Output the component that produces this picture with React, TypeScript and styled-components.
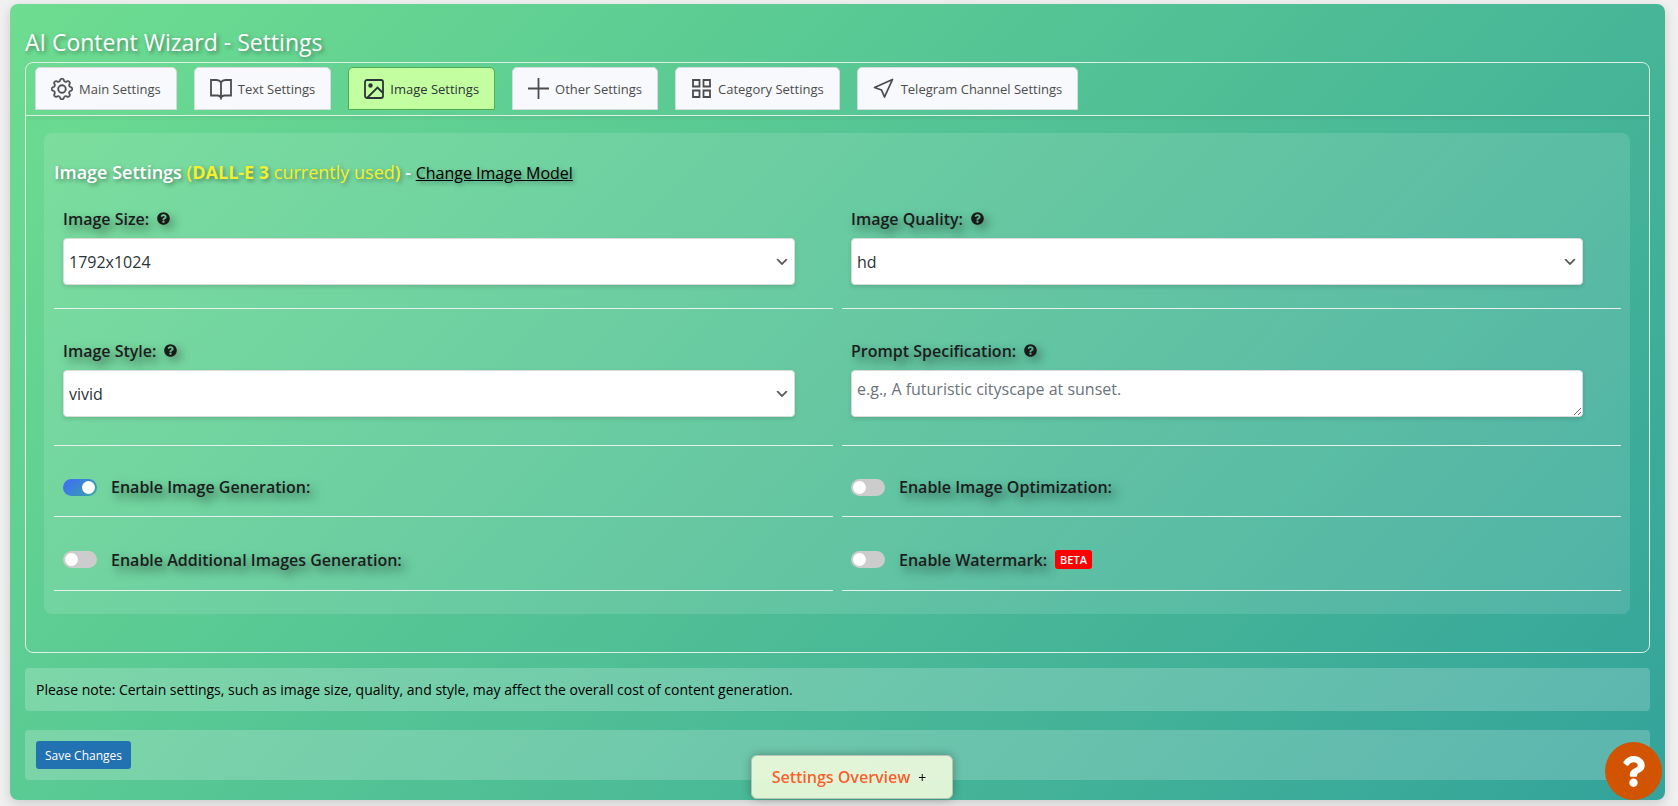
import React, { useState } from "react";
import styled, { createGlobalStyle, css } from "styled-components";
import { BsGear } from "react-icons/bs";
import { FaQuestion, FaQuestionCircle } from "react-icons/fa";

const GlobalStyle = createGlobalStyle`
  * { box-sizing: border-box; }
  body {
    margin: 0;
    background: #f0f0f1;
    color: #1d2327;
    font-family: "Segoe UI", "Open Sans", "Noto Sans", sans-serif;
    font-size: 14px;
  }
  button, input, select, textarea { font-family: inherit; }
`;

const Page = styled.main`
  margin: 4px 13px 6px 10px;
  padding: 23px 15px 20px;
  border-radius: 8px;
  background: linear-gradient(135deg, #6edd90, #33a39b);
  box-shadow: 0 4px 12px rgba(0, 0, 0, 0.15);
`;

const Title = styled.h1`
  margin: 0;
  height: 35px;
  color: #fff;
  font-size: 23px;
  line-height: 31px;
  font-weight: 400;
  text-shadow: 2px 2px 4px rgba(0, 0, 0, 0.4);
`;

const Tabbed = styled.section`
  border: 1px solid #dcf0e4;
  border-radius: 8px;
`;

const TabBar = styled.nav`
  display: flex;
  gap: 17px;
  padding: 4px 9px 5px;
  border-bottom: 1px solid #dcf0e4;
  box-shadow: 0 2px 4px rgba(0, 0, 0, 0.05);
`;

const Tab = styled.button<{ $active?: boolean }>`
  display: flex;
  align-items: center;
  gap: 6px;
  height: 43px;
  padding: 0 15px;
  border: 1px solid #d5dbdc;
  border-radius: 5px 5px 0 0;
  background: #f8f9fc;
  color: #4c4c4c;
  font-size: 13px;
  font-weight: 500;
  white-space: nowrap;
  svg { flex: none; }
  ${(p) =>
    p.$active &&
    css`
      background: #c3ffa0;
      border-color: #4fae4f;
      color: #2c3338;
    `}
`;

const TabBody = styled.div`
  padding: 17px 19px 38px 18px;
`;

const Card = styled.div`
  padding: 24px 9px 23px 10px;
  border-radius: 8px;
  background: rgba(255, 255, 255, 0.12);
`;

const Heading = styled.h2`
  margin: 0;
  color: #fff;
  font-size: 18px;
  line-height: 30px;
  font-weight: 600;
  text-shadow: 2px 2px 4px rgba(0, 0, 0, 0.4);
  a { color: #000; font-size: 16px; line-height: 20px; font-weight: 400; }
`;

const Model = styled.span`
  color: #f5f02a;
  span { font-weight: 400; }
  strong { font-weight: 700; }
`;

const Grid = styled.div`
  display: grid;
  grid-template-columns: 1fr 1fr;
  column-gap: 9px;
`;

const Cell = styled.div<{ $height: number }>`
  height: ${(p) => p.$height}px;
  padding: 0 38px 0 9px;
  border-bottom: 1px solid #e8f0ec;
`;

const FieldCell = styled(Cell)<{ $top: number }>`
  padding-top: ${(p) => p.$top}px;
`;

const ToggleCell = styled(Cell)`
  display: flex;
  align-items: center;
  gap: 14px;
  padding-top: 12px;
`;

const labelText = css`
  color: #1a1d1c;
  font-size: 16px;
  line-height: 24px;
  font-weight: 600;
  text-shadow: 5px 5px 10px rgba(0, 0, 0, 0.5);
`;

const FieldHead = styled.div`
  display: flex;
  align-items: center;
  gap: 8px;
  height: 24px;
  margin-bottom: 7px;
  label { ${labelText} }
  svg { color: #1a1a1a; margin-bottom: 2px; filter: drop-shadow(4px 4px 5px rgba(0, 0, 0, 0.4)); }
`;

const ToggleLabel = styled.label`
  ${labelText}
`;

const control = css`
  display: block;
  width: 100%;
  height: 47px;
  border: 1px solid #d8dcda;
  border-radius: 4px;
  background: #fff;
  color: #2c3338;
  font-size: 16px;
  line-height: 24px;
  box-shadow: 0 2px 4px rgba(0, 0, 0, 0.12);
`;

const SelectBox = styled.div`
  display: grid;
  align-items: center;
  > * { grid-area: 1 / 1; }
  svg { justify-self: end; margin-right: 5px; pointer-events: none; }
`;

const Select = styled.select`
  ${control}
  appearance: none;
  padding: 0 24px 0 5px;
`;

const TextArea = styled.textarea`
  ${control}
  padding: 6px 5px;
  resize: vertical;
  &::placeholder { color: #6b737b; opacity: 1; }
`;

const Switch = styled.input`
  appearance: none;
  flex: none;
  width: 34px;
  height: 17px;
  margin: 0;
  padding: 2px;
  border-radius: 9px;
  background: #ccc;
  cursor: pointer;
  &::before {
    content: "";
    display: block;
    width: 13px;
    height: 13px;
    border-radius: 50%;
    background: #fff;
  }
  &:checked { background: linear-gradient(135deg, #4169ff, #36a79b); }
  &:checked::before { margin-left: 17px; }
`;

const Beta = styled.span`
  margin-left: -6px;
  padding: 0 5px;
  border-radius: 3px;
  background: #f00;
  color: #fff;
  font-size: 11px;
  line-height: 19px;
  font-weight: 600;
`;

const Strip = styled.div`
  margin-top: 15px;
  padding: 11px;
  border-radius: 4px;
  background: rgba(255, 255, 255, 0.2);
`;

const Note = styled(Strip)`
  color: #000;
  font-size: 14px;
  line-height: 21px;
`;

const Actions = styled(Strip)`
  margin-top: 19px;
`;

const Save = styled.button`
  display: block;
  height: 28px;
  padding: 0 9px;
  border: 0;
  border-radius: 3px;
  background: #2271b1;
  color: #fff;
  font-size: 12px;
`;

const Overview = styled.button`
  position: fixed;
  left: calc(50% + 13px);
  bottom: 7px;
  transform: translateX(-50%);
  display: flex;
  align-items: center;
  justify-content: center;
  gap: 8px;
  width: 202px;
  height: 44px;
  padding: 0 6px 0 0;
  border: 1px solid #b8c4b8;
  border-radius: 6px;
  background: rgba(240, 250, 220, 0.9);
  box-shadow: 0 0 10px rgba(0, 0, 0, 0.3);
  color: #ff5c2b;
  font-size: 16px;
  font-weight: 600;
  span { color: #000; font-size: 14px; font-weight: 400; }
`;

const Help = styled.button`
  position: fixed;
  right: 16px;
  bottom: 6px;
  display: grid;
  place-items: center;
  width: 57px;
  height: 58px;
  padding: 0;
  border: 0;
  border-radius: 50%;
  background: #d35400;
  color: #fff;
`;

const Chevron = () => (
  <svg width="16" height="16" viewBox="0 0 20 20" aria-hidden="true">
    <path d="M5 6l5 5 5-5 2 1-7 7-7-7 2-1z" fill="#555" />
  </svg>
);

const line = { fill: "none", stroke: "currentColor", strokeWidth: 1.8 };

const BookIcon = () => (
  <svg width="22" height="22" viewBox="0 0 22 22" aria-hidden="true" {...line}>
    <path d="M11 4.200C10 2.600 8.500 2 6.500 2H1v15.500h6.500c1.800 0 3 .8 3.500 2.500c.5-1.700 1.700-2.500 3.500-2.500H21V2h-5.500C13.500 2 12 2.600 11 4.200zV20" />
  </svg>
);

const ImageIcon = () => (
  <svg width="20" height="20" viewBox="0 0 20 20" aria-hidden="true" {...line}>
    <rect x="1" y="1" width="18" height="18" rx="2" />
    <circle cx="6.500" cy="6.500" r="2.200" fill="currentColor" stroke="none" />
    <path d="M3 19L13.500 8.500L19 14" />
  </svg>
);

const PlusIcon = () => (
  <svg width="21" height="21" viewBox="0 0 21 21" aria-hidden="true" {...line}>
    <path d="M10.500 0v21M0 10.500h21" />
  </svg>
);

const GridIcon = () => (
  <svg width="21" height="21" viewBox="0 0 21 21" aria-hidden="true" {...line}>
    <path d="M2 2h6.500v6.500H2zM12.500 2H19v6.500h-6.500zM2 12.500h6.500V19H2zM12.500 12.500H19V19h-6.500z" />
  </svg>
);

const SendIcon = () => (
  <svg width="22" height="21" viewBox="0 0 22 21" aria-hidden="true" {...line}>
    <path d="M19.500 1.500L1.500 9.500L8.500 12L11.500 19z" strokeLinejoin="round" />
  </svg>
);

const tabs = [
  { name: "Main Settings", icon: <BsGear size={22} stroke="currentColor" strokeWidth={0.3} /> },
  { name: "Text Settings", icon: <BookIcon /> },
  { name: "Image Settings", icon: <ImageIcon /> },
  { name: "Other Settings", icon: <PlusIcon /> },
  { name: "Category Settings", icon: <GridIcon /> },
  { name: "Telegram Channel Settings", icon: <SendIcon /> },
];

function SelectField(p: { id: string; label: string; value: string; options: string[]; top: number; height: number }) {
  return (
    <FieldCell $top={p.top} $height={p.height}>
      <FieldHead>
        <label htmlFor={p.id}>{p.label}</label>
        <FaQuestionCircle size={13} />
      </FieldHead>
      <SelectBox>
        <Select id={p.id} defaultValue={p.value}>
          {p.options.map((o) => (
            <option key={o}>{o}</option>
          ))}
        </Select>
        <Chevron />
      </SelectBox>
    </FieldCell>
  );
}

function ToggleField(p: { id: string; label: string; on?: boolean; beta?: boolean; height: number }) {
  return (
    <ToggleCell $height={p.height}>
      <Switch type="checkbox" id={p.id} defaultChecked={p.on} />
      <ToggleLabel htmlFor={p.id}>{p.label}</ToggleLabel>
      {p.beta && <Beta>BETA</Beta>}
    </ToggleCell>
  );
}

export default function App() {
  const [active, setActive] = useState("Image Settings");
  return (
    <>
      <GlobalStyle />
      <Page>
        <Title>AI Content Wizard - Settings</Title>
        <Tabbed>
          <TabBar>
            {tabs.map((t) => (
              <Tab key={t.name} type="button" $active={t.name === active} onClick={() => setActive(t.name)}>
                {t.icon}
                {t.name}
              </Tab>
            ))}
          </TabBar>
          <TabBody>
            <Card>
              <Heading>
                Image Settings{" "}
                <Model>
                  (<strong>DALL-E 3</strong> <span>currently used</span>)
                </Model>{" "}
                - <a href="#model">Change Image Model</a>
              </Heading>
              <Grid>
                <SelectField id="size" label="Image Size:" value="1792x1024" options={["1024x1024", "1792x1024", "1024x1792"]} top={20} height={122} />
                <SelectField id="quality" label="Image Quality:" value="hd" options={["standard", "hd"]} top={20} height={122} />
                <SelectField id="style" label="Image Style:" value="vivid" options={["vivid", "natural"]} top={30} height={137} />
                <FieldCell $top={30} $height={137}>
                  <FieldHead>
                    <label htmlFor="prompt">Prompt Specification:</label>
                    <FaQuestionCircle size={13} />
                  </FieldHead>
                  <TextArea id="prompt" placeholder="e.g., A futuristic cityscape at sunset." />
                </FieldCell>
                <ToggleField id="gen" label="Enable Image Generation:" on height={71} />
                <ToggleField id="opt" label="Enable Image Optimization:" height={71} />
                <ToggleField id="more" label="Enable Additional Images Generation:" height={74} />
                <ToggleField id="mark" label="Enable Watermark:" beta height={74} />
              </Grid>
            </Card>
          </TabBody>
        </Tabbed>
        <Note>
          Please note: Certain settings, such as image size, quality, and style, may affect the overall cost of content
          generation.
        </Note>
        <Actions>
          <Save type="button">Save Changes</Save>
        </Actions>
      </Page>
      <Overview type="button">
        Settings Overview <span>+</span>
      </Overview>
      <Help type="button" aria-label="Help">
        <FaQuestion size={31} />
      </Help>
    </>
  );
}
